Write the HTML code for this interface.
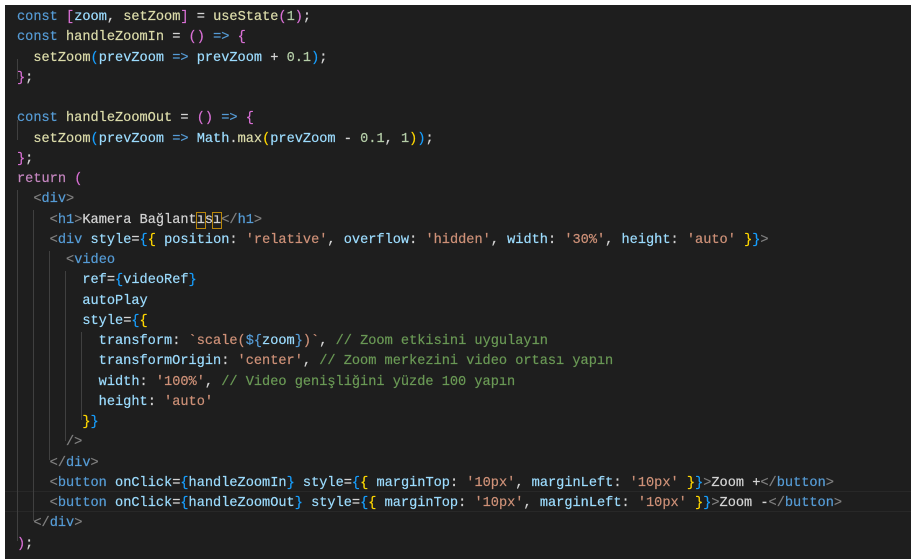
<!DOCTYPE html>
<html><head><meta charset="utf-8"><style>
html,body{margin:0;padding:0;background:#fff;width:911px;height:559px;overflow:hidden}
#ed{position:absolute;left:5px;top:5px;width:906px;height:554px;background:#1e1e1e}
pre{position:absolute;left:12px;top:3px;margin:0;font-family:"Liberation Mono",monospace;font-size:13.62px;line-height:20.25px;color:#d4d4d4;white-space:pre;-webkit-text-stroke:0.2px}
.k{color:#569cd6}.v{color:#9cdcfe}.f{color:#dcdcaa}.s{color:#ce9178}.n{color:#b5cea8}.c{color:#6a9955}.p{color:#808080}.m{color:#c586c0}
.b1{color:#ffd700}.b2{color:#da70d6}.b3{color:#179fff}
.g{position:absolute;width:1px;background:#404040}
.hl{position:absolute;left:0;width:906px;top:486px;height:19px;border-top:1px solid #282828;border-bottom:1px solid #282828}
.box{outline:1px solid #b8860b}
</style></head><body><div id="ed">
<div class="hl"></div>
<div class="g" style="left:12px;top:54px;height:20px"></div>
<div class="g" style="left:12px;top:115px;height:20px"></div>
<div class="g" style="left:12px;top:185px;height:351px"></div>
<div class="g" style="left:28px;top:205px;height:311px"></div>
<div class="g" style="left:44px;top:246px;height:209px"></div>
<div class="g" style="left:60px;top:266px;height:170px"></div>
<div class="g" style="left:76px;top:327px;height:88px"></div>
<pre><span class="k">const</span> <span class="b2">[</span><span class="v">zoom</span>, <span class="f">setZoom</span><span class="b2">]</span> = <span class="f">useState</span><span class="b2">(</span><span class="n">1</span><span class="b2">)</span>;
<span class="k">const</span> <span class="f">handleZoomIn</span> = <span class="b2">()</span> <span class="k">=&gt;</span> <span class="b2">{</span>
  <span class="f">setZoom</span><span class="b3">(</span><span class="v">prevZoom</span> <span class="k">=&gt;</span> <span class="v">prevZoom</span> + <span class="n">0.1</span><span class="b3">)</span>;
<span class="b2">}</span>;

<span class="k">const</span> <span class="f">handleZoomOut</span> = <span class="b2">()</span> <span class="k">=&gt;</span> <span class="b2">{</span>
  <span class="f">setZoom</span><span class="b3">(</span><span class="v">prevZoom</span> <span class="k">=&gt;</span> <span class="v">Math</span>.<span class="f">max</span><span class="b1">(</span><span class="v">prevZoom</span> - <span class="n">0.1</span>, <span class="n">1</span><span class="b1">)</span><span class="b3">)</span>;
<span class="b2">}</span>;
<span class="m">return</span> <span class="b2">(</span>
  <span class="p">&lt;</span><span class="k">div</span><span class="p">&gt;</span>
    <span class="p">&lt;</span><span class="k">h1</span><span class="p">&gt;</span>Kamera Bağlant<span class="box">ı</span>s<span class="box">ı</span><span class="p">&lt;/</span><span class="k">h1</span><span class="p">&gt;</span>
    <span class="p">&lt;</span><span class="k">div</span> <span class="v">style</span>=<span class="b3">{</span><span class="b1">{</span> <span class="v">position</span>: <span class="s">'relative'</span>, <span class="v">overflow</span>: <span class="s">'hidden'</span>, <span class="v">width</span>: <span class="s">'30%'</span>, <span class="v">height</span>: <span class="s">'auto'</span> <span class="b1">}</span><span class="b3">}</span><span class="p">&gt;</span>
      <span class="p">&lt;</span><span class="k">video</span>
        <span class="v">ref</span>=<span class="b3">{</span><span class="v">videoRef</span><span class="b3">}</span>
        <span class="v">autoPlay</span>
        <span class="v">style</span>=<span class="b3">{</span><span class="b1">{</span>
          <span class="v">transform</span>: <span class="s">`scale(</span><span class="k">${</span><span class="v">zoom</span><span class="k">}</span><span class="s">)`</span>, <span class="c">// Zoom etkisini uygulayın</span>
          <span class="v">transformOrigin</span>: <span class="s">'center'</span>, <span class="c">// Zoom merkezini video ortası yapın</span>
          <span class="v">width</span>: <span class="s">'100%'</span>, <span class="c">// Video genişliğini yüzde 100 yapın</span>
          <span class="v">height</span>: <span class="s">'auto'</span>
        <span class="b1">}</span><span class="b3">}</span>
      <span class="p">/&gt;</span>
    <span class="p">&lt;/</span><span class="k">div</span><span class="p">&gt;</span>
    <span class="p">&lt;</span><span class="k">button</span> <span class="v">onClick</span>=<span class="b3">{</span><span class="v">handleZoomIn</span><span class="b3">}</span> <span class="v">style</span>=<span class="b3">{</span><span class="b1">{</span> <span class="v">marginTop</span>: <span class="s">'10px'</span>, <span class="v">marginLeft</span>: <span class="s">'10px'</span> <span class="b1">}</span><span class="b3">}</span><span class="p">&gt;</span>Zoom +<span class="p">&lt;/</span><span class="k">button</span><span class="p">&gt;</span>
    <span class="p">&lt;</span><span class="k">button</span> <span class="v">onClick</span>=<span class="b3">{</span><span class="v">handleZoomOut</span><span class="b3">}</span> <span class="v">style</span>=<span class="b3">{</span><span class="b1">{</span> <span class="v">marginTop</span>: <span class="s">'10px'</span>, <span class="v">marginLeft</span>: <span class="s">'10px'</span> <span class="b1">}</span><span class="b3">}</span><span class="p">&gt;</span>Zoom -<span class="p">&lt;/</span><span class="k">button</span><span class="p">&gt;</span>
  <span class="p">&lt;/</span><span class="k">div</span><span class="p">&gt;</span>
<span class="b2">)</span>;</pre>
</div></body></html>
